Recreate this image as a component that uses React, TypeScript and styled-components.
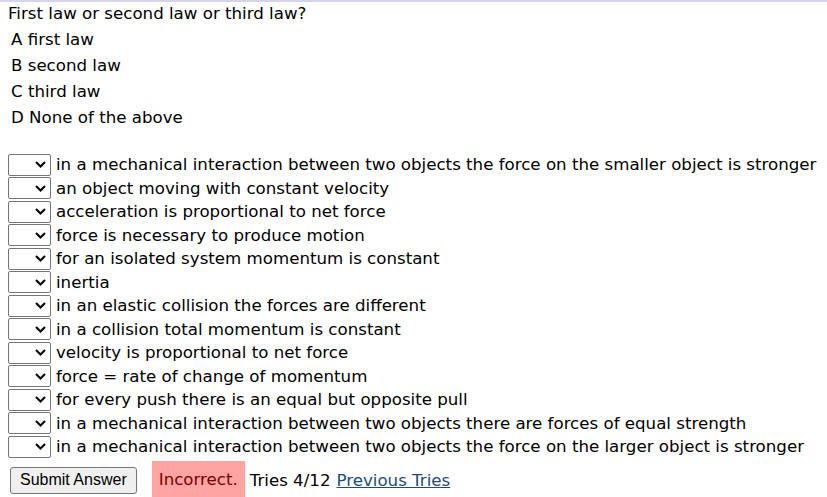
import React from "react";
import styled, { createGlobalStyle } from "styled-components";

const Global = createGlobalStyle`
  html, body { margin: 0; padding: 0; background: #fff; }
  body { font-family: "DejaVu Sans", Verdana, sans-serif; font-size: 16.65px; color: #000; }
`;

const Page = styled.div`
  border-top: 2px solid #d4d4f0;
  padding: 2px 0 0 8px;
`;

const Question = styled.div`
  line-height: 20px;
  margin-bottom: 3px;
`;

const Choices = styled.div`
  display: flex;
  flex-direction: column;
  padding-left: 3px;
`;

const Choice = styled.div`
  line-height: 26px;
`;

const Matches = styled.div`
  display: flex;
  flex-direction: column;
  margin-top: 22px;
`;

const Row = styled.div`
  display: flex;
  align-items: center;
  height: 23.5px;
  gap: 5px;
`;

const Select = styled.div`
  box-sizing: border-box;
  width: 43px;
  height: 22px;
  border: 1px solid #767676;
  border-radius: 2px;
  background: #fff;
  display: flex;
  align-items: center;
  justify-content: flex-end;
  padding-right: 4px;
  flex: none;
`;

const Label = styled.span`
  white-space: nowrap;
`;

const Footer = styled.div`
  display: flex;
  align-items: center;
  margin-top: 2px;
`;

const Button = styled.button`
  font-family: "Liberation Sans", Arial, sans-serif;
  font-size: 16px;
  height: 27px;
  padding: 0 9px;
  margin-left: 2px;
  background: #efefef;
  border: 1px solid #767676;
  border-radius: 3px;
  color: #000;
`;

const Status = styled.span`
  background: #ffa3a3;
  color: #7a0000;
  padding: 9px 7px 10px;
  margin-left: 15px;
  line-height: 20px;
`;

const Tries = styled.span`
  margin-left: 5px;
`;

const Link = styled.a`
  color: #1c4e78;
  text-decoration: underline;
  margin-left: 6px;
`;

const Chevron = () => (
  <svg width="11" height="7" viewBox="0 0 11 7">
    <path d="M1 1 L5.5 5.5 L10 1" fill="none" stroke="#000" strokeWidth="2" />
  </svg>
);

const items = [
  "in a mechanical interaction between two objects the force on the smaller object is stronger",
  "an object moving with constant velocity",
  "acceleration is proportional to net force",
  "force is necessary to produce motion",
  "for an isolated system momentum is constant",
  "inertia",
  "in an elastic collision the forces are different",
  "in a collision total momentum is constant",
  "velocity is proportional to net force",
  "force = rate of change of momentum",
  "for every push there is an equal but opposite pull",
  "in a mechanical interaction between two objects there are forces of equal strength",
  "in a mechanical interaction between two objects the force on the larger object is stronger",
];

export default function App() {
  return (
    <>
      <Global />
      <Page>
        <Question>First law or second law or third law?</Question>
        <Choices>
          <Choice>A first law</Choice>
          <Choice>B second law</Choice>
          <Choice>C third law</Choice>
          <Choice>D None of the above</Choice>
        </Choices>
        <Matches>
          {items.map((t, i) => (
            <Row key={i}>
              <Select>
                <Chevron />
              </Select>
              <Label>{t}</Label>
            </Row>
          ))}
        </Matches>
        <Footer>
          <Button>Submit Answer</Button>
          <Status>Incorrect.</Status>
          <Tries>Tries 4/12</Tries>
          <Link href="#">Previous Tries</Link>
        </Footer>
      </Page>
    </>
  );
}
